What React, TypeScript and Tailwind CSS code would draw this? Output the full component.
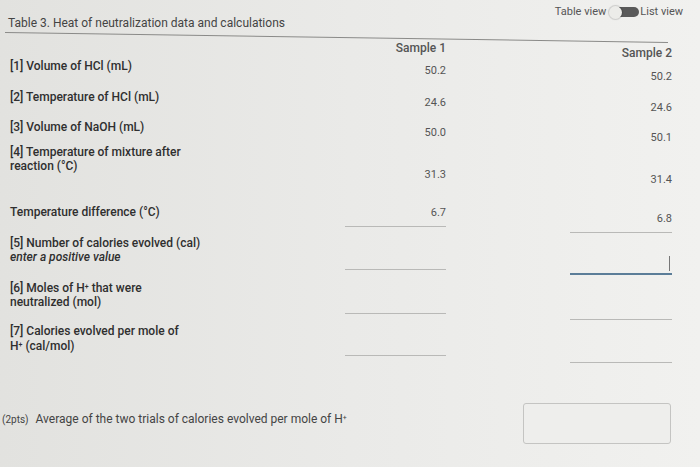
import { ReactNode } from 'react'

function Label({ children, className }: { children: ReactNode; className?: string }) {
  return (
    <div className={`text-[12px] leading-[14px] font-medium text-[#2f2f2f] ${className ?? ''}`}>
      {children}
    </div>
  )
}

function Value({ children, className }: { children: ReactNode; className?: string }) {
  return (
    <div className={`text-right text-[11px] leading-[14px] text-[#555] ${className ?? ''}`}>
      {children}
    </div>
  )
}

function Blank({ className }: { className?: string }) {
  return <div className={`h-[20px] border-b border-[#b9b9b7] ${className ?? ''}`} />
}

export default function App() {
  return (
    <div className="w-[700px] h-[467px] overflow-hidden bg-gradient-to-r from-[#e2e2df] via-[#eaeae8] to-[#f1f1ef] font-['Roboto',sans-serif]">
      {/* header */}
      <div className="h-[33px] flex items-start justify-between pl-[8px] pr-[17px]">
        <div className="mt-[16px] text-[12px] leading-[14px] text-[#444]">
          Table 3. Heat of neutralization data and calculations
        </div>
        <div className="mt-[5px] flex items-center text-[11px] leading-[14px] text-[#555]">
          <span>Table view</span>
          <div className="relative ml-[3px] w-[30px] h-[13px] flex items-center justify-end">
            <div className="w-[20px] h-[10px] rounded-r-full bg-[#5a5a5a]" />
            <div className="absolute left-0 top-0 w-[13px] h-[13px] rounded-full bg-[#ecece9] shadow-[0_0_1px_1px_rgba(0,0,0,0.15)]" />
          </div>
          <span className="ml-[1px]">List view</span>
        </div>
      </div>
      <div className="h-[8px] pl-[5px] pr-[32px] flex items-center">
        <div className="w-full h-px bg-[#8a8a88] rotate-[0.86deg]" />
      </div>

      {/* table */}
      <div className="h-[362px] flex pl-[10px]">
        <div className="w-[335px] flex flex-col">
          <Label className="mt-[18px] h-[31px]">[1] Volume of HCl (mL)</Label>
          <Label className="h-[30px]">[2] Temperature of HCl (mL)</Label>
          <Label className="h-[25px]">[3] Volume of NaOH (mL)</Label>
          <Label className="h-[60px]">
            [4] Temperature of mixture after
            <br />
            reaction (°C)
          </Label>
          <Label className="h-[31px]">Temperature difference (°C)</Label>
          <Label className="h-[45px]">
            [5] Number of calories evolved (cal)
            <br />
            <span className="italic">enter a positive value</span>
          </Label>
          <Label className="h-[43px]">
            [6] Moles of H<sup className="text-[7px]">+</sup> that were
            <br />
            neutralized (mol)
          </Label>
          <Label className="leading-[15px]">
            [7] Calories evolved per mole of
            <br />
            H<sup className="text-[7px]">+</sup> (cal/mol)
          </Label>
        </div>

        <div className="w-[101px] flex flex-col">
          <Value className="font-medium text-[12px] text-[#333]">Sample 1</Value>
          <Value className="mt-[9px]">50.2</Value>
          <Value className="mt-[18px]">24.6</Value>
          <Value className="mt-[16px]">50.0</Value>
          <Value className="mt-[28px]">31.3</Value>
          <div className="mt-[24px] h-[21px] border-b border-[#b9b9b7]">
            <Value>6.7</Value>
          </div>
          <Blank className="mt-[23px]" />
          <Blank className="mt-[24px]" />
          <Blank className="mt-[22px]" />
        </div>

        <div className="w-[124px]" />

        <div className="w-[102px] flex flex-col">
          <Value className="mt-[5px] font-medium text-[12px] text-[#333]">Sample 2</Value>
          <Value className="mt-[10px]">50.2</Value>
          <Value className="mt-[17px]">24.6</Value>
          <Value className="mt-[16px]">50.1</Value>
          <Value className="mt-[28px]">31.4</Value>
          <div className="mt-[25px] h-[21px] border-b border-[#b9b9b7]">
            <Value>6.8</Value>
          </div>
          <div className="mt-[21px] h-[21px] flex justify-end items-end border-b-2 border-[#5b7d98]">
            <div className="mr-[2px] mb-[2px] w-px h-[15px] bg-[#777]" />
          </div>
          <Blank className="mt-[25px]" />
          <Blank className="mt-[23px]" />
        </div>
      </div>

      {/* average */}
      <div className="flex items-start pl-[2px] pr-[29px]">
        <div className="mt-[7px] flex items-baseline text-[#444]">
          <span className="text-[10px]">(2pts)</span>
          <span className="ml-[7px] text-[12px]">
            Average of the two trials of calories evolved per mole of H
            <sup className="text-[7px]">+</sup>
          </span>
        </div>
        <div className="ml-auto w-[148px] h-[41px] rounded-[3px] border border-[#c4c4c2] bg-[#eeeeec]" />
      </div>
    </div>
  )
}
